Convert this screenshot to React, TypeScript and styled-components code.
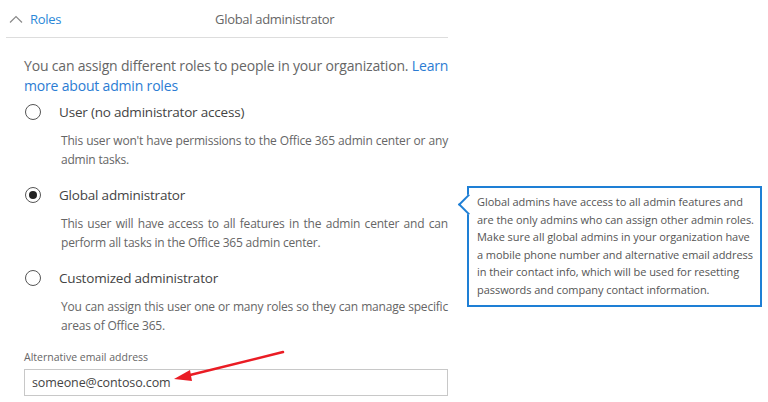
import React from 'react';
import styled, { createGlobalStyle } from 'styled-components';

const GlobalStyle = createGlobalStyle`
  html, body {
    margin: 0;
    padding: 0;
    background: #ffffff;
  }
  body {
    font-family: "Open Sans", "Noto Sans", Arial, sans-serif;
    color: #666666;
  }
`;

const Page = styled.div`
  position: relative;
  display: flex;
  align-items: flex-start;
  width: 768px;
  height: 402px;
  padding-left: 6px;
  box-sizing: border-box;
  overflow: hidden;
`;

const Panel = styled.div`
  width: 442px;
  flex-shrink: 0;
`;

const SectionHeader = styled.div`
  display: flex;
  align-items: center;
  height: 37px;
  border-bottom: 1px solid #dddddd;
  font-size: 13px;
  letter-spacing: -0.3px;
`;

const Chevron = styled.span`
  display: flex;
  width: 21px;
  padding-left: 3px;
`;

const SectionTitle = styled.span`
  color: #2b88d8;
  width: 185px;
`;

const SectionValue = styled.span`
  color: #666666;
`;

const Body = styled.div`
  padding: 18px 0 0 18px;
`;

const Intro = styled.p`
  margin: 0;
  width: 432px;
  font-size: 14px;
  letter-spacing: -0.18px;
  line-height: 19.5px;
  color: #666666;
`;

const Link = styled.a`
  color: #2b7cd3;
  text-decoration: none;
`;

const RadioRow = styled.label<{ $first?: boolean }>`
  display: flex;
  align-items: center;
  height: 28px;
  margin-top: ${(p) => (p.$first ? '3px' : '12px')};
  padding-left: 1px;
  font-size: 13.5px;
  letter-spacing: -0.2px;
  color: #444444;
  cursor: pointer;
`;

const RadioCircle = styled.span<{ $checked?: boolean }>`
  display: flex;
  align-items: center;
  justify-content: center;
  width: 16px;
  height: 16px;
  box-sizing: border-box;
  border: 1.5px solid #555555;
  border-radius: 50%;
  margin-right: 18px;
  &::after {
    content: '';
    display: ${(p) => (p.$checked ? 'block' : 'none')};
    width: 8px;
    height: 8px;
    border-radius: 50%;
    background: #222222;
  }
`;

const RadioDesc = styled.p`
  margin: 6px 0 0 37px;
  font-size: 12px;
  letter-spacing: -0.2px;
  line-height: 18.5px;
  color: #666666;
  text-align: justify;
`;

const FieldLabel = styled.div`
  margin-top: 15px;
  font-size: 10.5px;
  line-height: 14px;
  color: #666666;
`;

const TextInput = styled.input`
  display: block;
  width: 424px;
  height: 27px;
  margin-top: 5px;
  box-sizing: border-box;
  border: 1px solid #c8c8c8;
  padding: 0 7px;
  font-family: "Open Sans", "Noto Sans", Arial, sans-serif;
  font-size: 12.5px;
  letter-spacing: -0.1px;
  color: #444444;
  outline: none;
`;

const Callout = styled.div`
  position: relative;
  margin: 186px 0 0 19px;
  width: 295px;
  box-sizing: border-box;
  border: 2px solid #1e7fd5;
  background: #ffffff;
  padding: 5px 3px 6px 8px;
  font-size: 11px;
  letter-spacing: -0.05px;
  line-height: 17.6px;
  color: #555555;
`;

const Beak = styled.span`
  position: absolute;
  left: -8px;
  top: 9px;
  width: 13px;
  height: 13px;
  background: #ffffff;
  border-left: 2px solid #1e7fd5;
  border-bottom: 2px solid #1e7fd5;
  transform: rotate(45deg);
`;

const CalloutLine = styled.div`
  position: relative;
  white-space: nowrap;
`;

const Annotation = styled.svg`
  position: absolute;
  left: 0;
  top: 0;
  pointer-events: none;
`;

const roles = [
  {
    label: 'User (no administrator access)',
    desc: "This user won't have permissions to the Office 365 admin center or any admin tasks.",
    checked: false,
  },
  {
    label: 'Global administrator',
    desc: 'This user will have access to all features in the admin center and can perform all tasks in the Office 365 admin center.',
    checked: true,
  },
  {
    label: 'Customized administrator',
    desc: 'You can assign this user one or many roles so they can manage specific areas of Office 365.',
    checked: false,
  },
];

const calloutLines = [
  'Global admins have access to all admin features and',
  'are the only admins who can assign other admin roles.',
  'Make sure all global admins in your organization have',
  'a mobile phone number and alternative email address',
  'in their contact info, which will be used for resetting',
  'passwords and company contact information.',
];

export default function App() {
  return (
    <>
      <GlobalStyle />
      <Page>
        <Panel>
          <SectionHeader>
            <Chevron>
              <svg width="14" height="8" viewBox="0 0 14 8">
                <path d="M1 7.5 L7 1.5 L13 7.5" fill="none" stroke="#8a8a8a" strokeWidth="1.2" />
              </svg>
            </Chevron>
            <SectionTitle>Roles</SectionTitle>
            <SectionValue>Global administrator</SectionValue>
          </SectionHeader>
          <Body>
            <Intro>
              You can assign different roles to people in your organization.{' '}
              <Link href="#">Learn more about admin roles</Link>
            </Intro>
            {roles.map((r, i) => (
              <React.Fragment key={r.label}>
                <RadioRow $first={i === 0}>
                  <RadioCircle $checked={r.checked} />
                  {r.label}
                </RadioRow>
                <RadioDesc>{r.desc}</RadioDesc>
              </React.Fragment>
            ))}
            <FieldLabel>Alternative email address</FieldLabel>
            <TextInput defaultValue="someone@contoso.com" />
          </Body>
        </Panel>
        <Callout>
          <Beak />
          {calloutLines.map((line) => (
            <CalloutLine key={line}>{line}</CalloutLine>
          ))}
        </Callout>
        <Annotation width="768" height="402" viewBox="0 0 768 402">
          <line x1="283" y1="352" x2="186" y2="376" stroke="#ea1c24" strokeWidth="2.5" strokeLinecap="round" />
          <polygon points="174,379 190,370 192,381" fill="#ea1c24" />
        </Annotation>
      </Page>
    </>
  );
}
